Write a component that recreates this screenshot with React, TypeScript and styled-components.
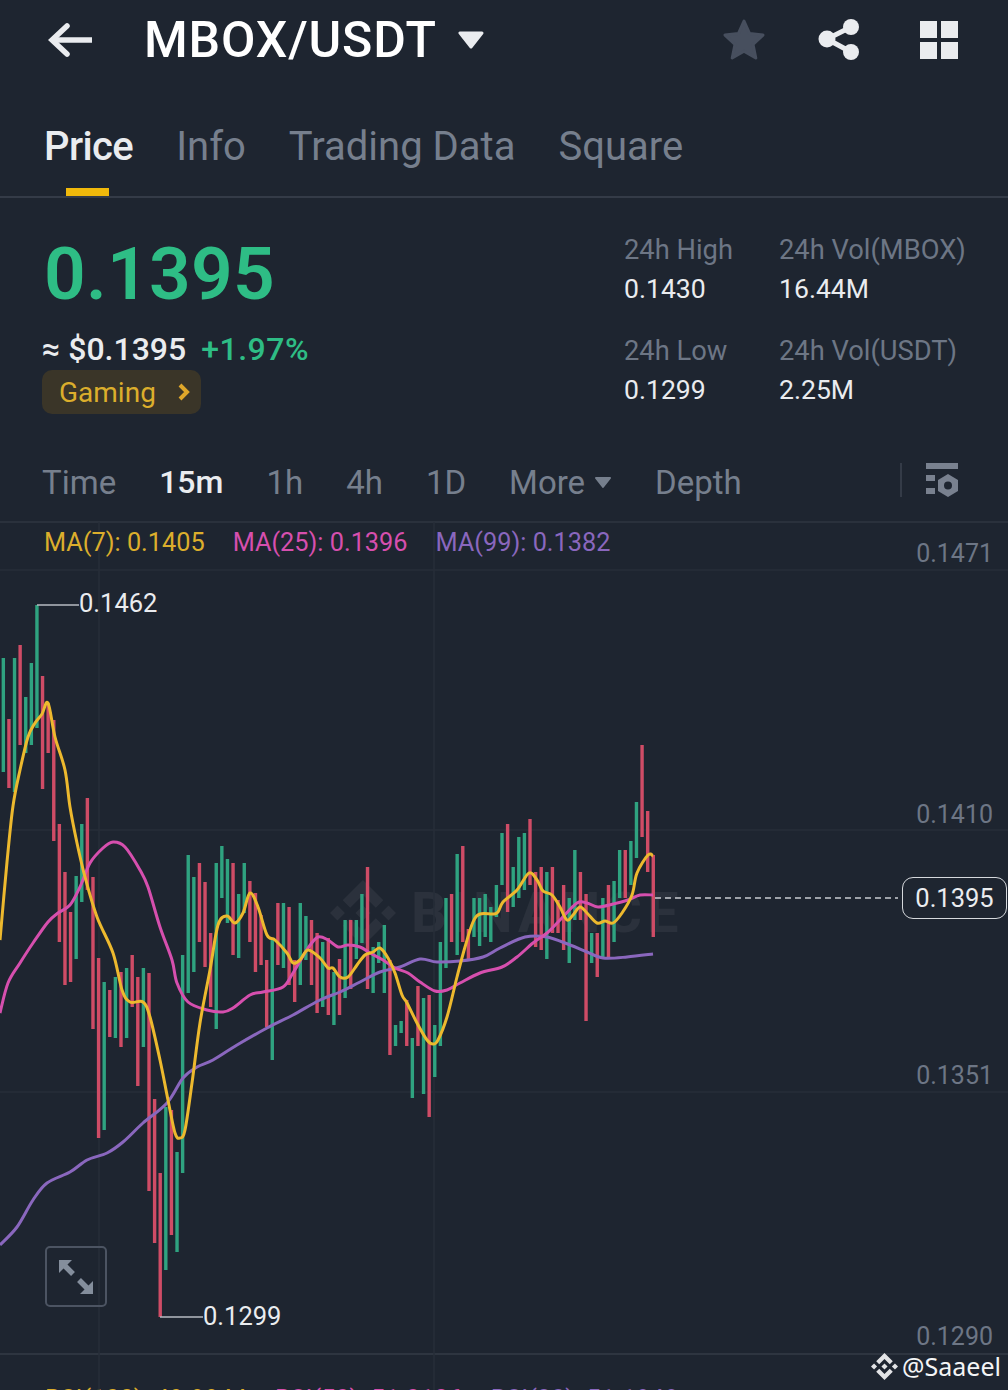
import React from 'react';
import styled, { createGlobalStyle } from 'styled-components';

const GlobalStyle = createGlobalStyle`
  html, body {
    margin: 0;
    padding: 0;
    background: #1e2530;
  }
  * {
    box-sizing: border-box;
  }
`;

const Page = styled.div`
  position: relative;
  width: 1008px;
  height: 1390px;
  overflow: hidden;
  background: #1e2530;
  color: #eaecef;
  font-family: Roboto, "Noto Sans", sans-serif;
`;

const Header = styled.header`
  display: flex;
  align-items: center;
  height: 80px;
  padding: 0 50px 0 48px;
`;

const Title = styled.h1`
  margin: 0 20px 0 52px;
  font-size: 50px;
  font-weight: 500;
  letter-spacing: 0.85px;
  line-height: 1;
  color: #fff;
`;

const HeaderActions = styled.div`
  display: flex;
  align-items: center;
  gap: 52px;
  margin-left: auto;
`;

const Tabs = styled.nav`
  display: flex;
  align-items: center;
  gap: 43px;
  height: 118px;
  padding: 16px 44px 0;
  border-bottom: 2px solid #343b47;
`;

const Tab = styled.span<{ $active?: boolean }>`
  position: relative;
  font-size: 40px;
  font-weight: ${p => (p.$active ? 500 : 400)};
  letter-spacing: ${p => (p.$active ? '-0.6px' : '0')};
  color: ${p => (p.$active ? '#eaecef' : '#767f8d')};

  ${p =>
    p.$active &&
    `&::after {
      content: '';
      position: absolute;
      left: 22px;
      right: 24px;
      bottom: -26px;
      height: 8px;
      background: #f0b90b;
    }`}
`;

const Summary = styled.section`
  display: flex;
  justify-content: space-between;
  height: 242px;
  padding: 36px 0 0 42px;
`;

const PriceBlock = styled.div`
  display: flex;
  flex-direction: column;
  align-items: flex-start;
`;

const LastPrice = styled.div`
  margin-left: 2px;
  font-size: 73px;
  font-weight: 600;
  line-height: 80px;
  letter-spacing: 0.3px;
  color: #2ebd85;
`;

const FiatRow = styled.div`
  display: flex;
  align-items: baseline;
  gap: 15px;
  margin-top: 16px;
  font-size: 32px;
  line-height: 38px;
`;

const FiatPrice = styled.span`
  font-weight: 500;
`;

const Change = styled.span`
  font-weight: 500;
  letter-spacing: 0.5px;
  color: #2ebd85;
`;

const CategoryChip = styled.div`
  display: flex;
  align-items: center;
  gap: 21px;
  height: 44px;
  margin-top: 2px;
  padding: 0 11px 0 17px;
  border-radius: 10px;
  background: #3a3528;
  font-size: 28px;
  color: #dcae2c;
`;

const StatsGrid = styled.div`
  display: grid;
  grid-template-columns: 155px 229px;
  grid-auto-rows: 101px;
`;

const Stat = styled.div`
  display: flex;
  flex-direction: column;
  gap: 5px;
`;

const StatLabel = styled.span`
  font-size: 27.3px;
  line-height: 33px;
  color: #6d7685;
`;

const StatValue = styled.span`
  font-size: 26.6px;
  line-height: 34px;
  color: #eaecef;
`;

const IntervalBar = styled.div`
  display: flex;
  align-items: center;
  gap: 43px;
  height: 83px;
  padding: 3px 49px 0 42px;
  border-bottom: 2px solid #2a313c;
`;

const Interval = styled.span<{ $active?: boolean }>`
  display: flex;
  align-items: center;
  gap: 9px;
  font-size: ${p => (p.$active ? 32 : 33)}px;
  font-weight: ${p => (p.$active ? 500 : 400)};
  color: ${p => (p.$active ? '#eaecef' : '#767f8d')};
`;

const BarTools = styled.div`
  display: flex;
  align-items: center;
  gap: 23px;
  margin: -4px 0 0 auto;
`;

const ToolDivider = styled.span`
  width: 2px;
  height: 34px;
  background: #343b47;
`;

const ChartPane = styled.section`
  position: relative;
  height: 832px;
  border-bottom: 2px solid #2e3540;
`;

const ChartCanvas = styled.svg`
  position: absolute;
  top: -1px;
  left: 0;
  width: 1008px;
  height: 868px;
`;

const Legend = styled.div`
  position: relative;
  display: flex;
  gap: 28px;
  padding: 2px 44px 0;
  font-size: 25.3px;
  line-height: 36px;
`;

const LegendItem = styled.span<{ $color: string }>`
  color: ${p => p.$color};
`;

const Watermark = styled.div`
  position: absolute;
  top: 357px;
  left: 330px;
  display: flex;
  align-items: center;
  gap: 15px;
  color: rgba(255, 255, 255, 0.06);
  font-size: 56px;
  font-weight: 700;
  letter-spacing: 5px;
`;

const AxisTick = styled.span<{ $top: number }>`
  position: absolute;
  top: ${p => p.$top}px;
  right: 15px;
  transform: translateY(-50%);
  font-size: 25px;
  color: #6d7685;
`;

const CurrentPrice = styled.span`
  position: absolute;
  top: 354px;
  left: 902px;
  display: flex;
  align-items: center;
  justify-content: center;
  width: 105px;
  height: 42px;
  border: 1.5px solid #d5d8dc;
  border-radius: 11px;
  background: #1e2530;
  font-size: 25.5px;
  color: #eaecef;
`;

const ExtremeLabel = styled.span<{ $top: number; $left: number }>`
  position: absolute;
  top: ${p => p.$top}px;
  left: ${p => p.$left}px;
  transform: translateY(-50%);
  font-size: 25.5px;
  color: #eaecef;
`;

const ExpandButton = styled.button`
  position: absolute;
  top: 723px;
  left: 45px;
  display: flex;
  align-items: center;
  justify-content: center;
  width: 62px;
  height: 61px;
  padding: 0;
  border: 2px solid #4c5462;
  border-radius: 5px;
  background: transparent;
`;

const RsiLegend = styled.div`
  display: flex;
  gap: 28px;
  padding: 27px 45px 0;
  font-size: 25.3px;
  line-height: 36px;
`;

const Credit = styled.div`
  position: absolute;
  top: 1348px;
  right: 7px;
  display: flex;
  align-items: center;
  gap: 4px;
  font-family: "Noto Sans", sans-serif;
  font-size: 25px;
  line-height: 36px;
  color: #f4f5f6;
`;

type Candle = [number, number, 'g' | 'r'];

const candles: Candle[] = [
  [658, 772, 'g'], [719, 788, 'r'], [658, 792, 'g'], [645, 745, 'r'], [697, 753, 'g'], [663, 745, 'g'],
  [605, 728, 'g'], [676, 789, 'r'], [703, 753, 'r'], [720, 841, 'r'], [824, 942, 'r'], [872, 985, 'r'],
  [912, 982, 'r'], [876, 959, 'g'], [824, 902, 'g'], [798, 890, 'r'], [877, 1029, 'r'], [958, 1138, 'r'],
  [982, 1130, 'g'], [990, 1037, 'r'], [977, 1038, 'g'], [972, 1047, 'r'], [968, 1038, 'g'], [955, 1007, 'r'],
  [977, 1086, 'r'], [968, 1047, 'g'], [973, 1191, 'r'], [1099, 1243, 'r'], [1173, 1317, 'r'], [1107, 1270, 'g'],
  [1110, 1235, 'r'], [1152, 1252, 'g'], [955, 1173, 'g'], [855, 993, 'g'], [877, 972, 'g'], [863, 942, 'r'],
  [882, 967, 'r'], [933, 1007, 'r'], [863, 1029, 'g'], [846, 898, 'g'], [859, 923, 'g'], [863, 955, 'r'],
  [894, 958, 'g'], [863, 913, 'g'], [881, 942, 'r'], [893, 972, 'r'], [915, 965, 'r'], [960, 1027, 'r'],
  [940, 1060, 'g'], [903, 965, 'r'], [903, 968, 'g'], [907, 985, 'r'], [960, 1002, 'r'], [903, 985, 'g'],
  [916, 960, 'g'], [920, 985, 'r'], [933, 1013, 'r'],
  [942, 1007, 'g'], [938, 1015, 'r'], [972, 1025, 'g'], [959, 1015, 'r'], [920, 998, 'g'], [920, 989, 'r'],
  [920, 959, 'g'], [894, 943, 'g'], [867, 989, 'r'], [947, 993, 'g'], [942, 963, 'g'], [925, 993, 'g'],
  [960, 1055, 'r'], [1025, 1046, 'g'], [1021, 1033, 'g'], [1000, 1046, 'r'], [1038, 1098, 'g'], [986, 1046, 'r'],
  [998, 1094, 'g'], [995, 1117, 'r'], [1025, 1077, 'g'], [942, 1046, 'g'], [898, 968, 'g'], [894, 942, 'r'],
  [854, 955, 'g'], [846, 942, 'r'], [929, 960, 'r'], [898, 937, 'g'], [898, 946, 'g'], [894, 937, 'g'],
  [907, 942, 'g'], [885, 917, 'g'], [833, 885, 'g'], [824, 912, 'r'], [867, 907, 'g'], [837, 898, 'g'],
  [833, 890, 'g'], [819, 885, 'r'], [872, 947, 'r'], [867, 950, 'r'], [872, 959, 'g'], [867, 933, 'r'],
  [900, 933, 'r'], [885, 950, 'r'], [898, 963, 'g'], [850, 920, 'g'], [872, 920, 'r'], [894, 1021, 'r'],
  [933, 963, 'g'], [933, 977, 'r'], [898, 959, 'g'], [885, 959, 'r'], [881, 942, 'g'], [850, 898, 'g'],
  [850, 898, 'r'], [841, 885, 'g'], [802, 858, 'g'], [745, 837, 'r'], [811, 872, 'r'], [855, 937, 'r'],
];

const ma7: number[][] = [
  [0, 940], [7, 862], [13, 806], [20, 770], [28, 737], [35, 723], [42, 714], [48, 703], [55, 737], [65, 770], [70, 807],
  [77, 843], [85, 877], [97, 917], [113, 953], [122, 990], [130, 1002], [143, 1002], [150, 1017], [160, 1060],
  [168, 1100], [175, 1133], [180, 1138], [185, 1130], [192, 1083], [200, 1023], [210, 970], [218, 925], [227, 916],
  [235, 923], [243, 913], [250, 893], [258, 907], [267, 935], [275, 940], [287, 953], [293, 963], [300, 960],
  [308, 950], [320, 958], [328, 968], [333, 968], [340, 977], [348, 977], [357, 965], [365, 955], [373, 952],
  [380, 948], [388, 958], [395, 973], [402, 995], [407, 1003], [417, 1023], [427, 1040], [433, 1044], [438, 1040],
  [447, 1017], [457, 977], [465, 947], [473, 922], [480, 914], [493, 914], [498, 912], [503, 902], [517, 890],
  [529, 873], [537, 880], [543, 891], [552, 895], [560, 907], [567, 920], [573, 915], [580, 907], [587, 913],
  [597, 923], [605, 921], [613, 923], [622, 913], [632, 895], [637, 873], [648, 855], [653, 856],
];

const ma25: number[][] = [
  [0, 1013], [8, 983], [20, 963], [33, 943], [48, 922], [58, 913], [70, 905], [80, 887], [90, 863], [103, 848],
  [113, 842], [125, 847], [140, 870], [148, 887], [160, 927], [172, 960], [177, 983], [188, 1002], [207, 1010],
  [223, 1012], [233, 1008], [250, 995], [263, 992], [283, 987], [293, 973], [308, 948], [318, 937], [328, 940],
  [338, 947], [348, 945], [360, 947], [370, 953], [383, 960], [395, 968], [408, 973], [420, 982], [435, 991],
  [447, 990], [460, 983], [480, 973], [502, 967], [517, 957], [533, 943], [547, 933], [560, 920], [577, 903],
  [587, 903], [598, 907], [613, 904], [628, 900], [640, 895], [653, 895],
];

const ma99: number[][] = [
  [0, 1245], [17, 1227], [33, 1200], [47, 1183], [70, 1172], [87, 1160], [107, 1153], [123, 1142], [143, 1123],
  [167, 1103], [183, 1078], [197, 1067], [213, 1060], [237, 1045], [267, 1028], [293, 1015], [320, 1000], [340, 992],
  [360, 982], [380, 972], [400, 967], [420, 959], [437, 962], [460, 961], [483, 957], [500, 948], [525, 937],
  [547, 937], [570, 945], [587, 952], [603, 958], [627, 957], [653, 954],
];

// catmull-rom through the sampled points, so the averages don't look faceted
const smoothPath = (pts: number[][]) => {
  let d = `M${pts[0][0]} ${pts[0][1]}`;
  for (let i = 0; i < pts.length - 1; i++) {
    const p0 = pts[Math.max(i - 1, 0)];
    const p1 = pts[i];
    const p2 = pts[i + 1];
    const p3 = pts[Math.min(i + 2, pts.length - 1)];
    const c1x = p1[0] + (p2[0] - p0[0]) / 6;
    const c1y = p1[1] + (p2[1] - p0[1]) / 6;
    const c2x = p2[0] - (p3[0] - p1[0]) / 6;
    const c2y = p2[1] - (p3[1] - p1[1]) / 6;
    d += `C${c1x.toFixed(1)} ${c1y.toFixed(1)} ${c2x.toFixed(1)} ${c2y.toFixed(1)} ${p2[0]} ${p2[1]}`;
  }
  return d;
};

const BinanceMark: React.FC<{ size: number; color: string }> = ({ size, color }) => (
  <svg width={size} height={size} viewBox="0 0 126.61 126.61" fill={color}>
    <path d="M38.73 53.2 63.3 28.63l24.59 24.59 14.3-14.3L63.3 0 24.43 38.88z" />
    <path d="M0 63.31l14.3-14.3 14.3 14.3-14.3 14.3z" />
    <path d="M38.73 73.41 63.3 97.98l24.59-24.59 14.3 14.29-38.89 38.93-38.87-38.88z" />
    <path d="M98.01 63.31l14.3-14.3 14.3 14.3-14.3 14.3z" />
    <path d="M77.81 63.3 63.3 48.78 48.8 63.29l14.5 14.51z" />
  </svg>
);

const BackIcon = () => (
  <svg width="44" height="34" viewBox="0 0 44 34" fill="none" stroke="#eaecef" strokeWidth="5.5">
    <path d="M44 17H4" />
    <path d="M19 3 4 17l15 14" strokeLinecap="round" strokeLinejoin="miter" />
  </svg>
);

const Caret: React.FC<{ width: number; height: number; color: string }> = ({ width, height, color }) => (
  <svg width={width} height={height} viewBox="0 0 28 18">
    <path d="M3 2h22L14 16z" fill={color} stroke={color} strokeWidth="3" strokeLinejoin="round" />
  </svg>
);

const StarIcon = () => (
  <svg width="44" height="44" viewBox="0 0 44 44">
    <path
      d="M22 3l5.6 12.6 13.4 1.5-10 9.3 2.8 13.6L22 33.2 10.2 40l2.8-13.6-10-9.3 13.4-1.5z"
      fill="#474f5e"
      stroke="#474f5e"
      strokeWidth="3"
      strokeLinejoin="round"
    />
  </svg>
);

const ShareIcon = () => (
  <svg width="50" height="44" viewBox="0 0 50 44" fill="#eaecef" stroke="#eaecef">
    <path d="M33 9 9 21l24 13" fill="none" strokeWidth="5" />
    <circle cx="33" cy="9" r="8" stroke="none" />
    <circle cx="9" cy="21" r="8.5" stroke="none" />
    <circle cx="33" cy="34" r="8" stroke="none" />
  </svg>
);

const GridIcon = () => (
  <svg width="38" height="38" viewBox="0 0 38 38" fill="#eaecef">
    <rect x="0" y="0" width="17" height="17" />
    <rect x="21" y="0" width="17" height="17" />
    <rect x="0" y="21" width="17" height="17" />
    <rect x="21" y="21" width="17" height="17" />
  </svg>
);

const IndicatorIcon = () => (
  <svg width="34" height="36" viewBox="0 0 34 36" fill="#79818f">
    <rect x="1" y="1" width="32" height="6" />
    <rect x="1" y="13" width="9" height="6" />
    <rect x="1" y="26" width="9" height="6" />
    <path
      fillRule="evenodd"
      d="M23 12l10 6v11l-10 6-10-6V18zM23 19.5a4 4 0 1 0 0 8 4 4 0 0 0 0-8z"
    />
  </svg>
);

const ExpandIcon = () => (
  <svg width="38" height="38" viewBox="0 0 38 38" fill="#848e9c" stroke="#848e9c">
    <path d="M2 2h13L2 15z" stroke="none" />
    <path d="M36 36H23l13-13z" stroke="none" />
    <path d="M8 8l8 8M22 22l8 8" strokeWidth="5.5" fill="none" />
  </svg>
);

const ChevronIcon = () => (
  <svg width="13" height="18" viewBox="0 0 13 18" fill="none" stroke="#dfa72a" strokeWidth="4">
    <path d="M3 2l7 7-7 7" />
  </svg>
);

const tabs = ['Price', 'Info', 'Trading Data', 'Square'];

const stats = [
  { label: '24h High', value: '0.1430' },
  { label: '24h Vol(MBOX)', value: '16.44M' },
  { label: '24h Low', value: '0.1299' },
  { label: '24h Vol(USDT)', value: '2.25M' },
];

const axisTicks = [
  { label: '0.1471', y: 553 },
  { label: '0.1410', y: 814 },
  { label: '0.1351', y: 1075 },
  { label: '0.1290', y: 1336 },
];

const CandleChart = () => (
  <ChartCanvas viewBox="0 522 1008 868">
    <g stroke="#272e39" strokeWidth="1.5">
      <path d="M0 570H1008M0 830H1008M0 1092H1008" />
      <path d="M99 522V1390M434 522V1390" />
    </g>
    {candles.map(([top, bottom, side], i) => (
      <rect
        key={i}
        x={3.33 + 5.603 * i - 1.7}
        y={top}
        width="3.4"
        height={bottom - top}
        fill={side === 'g' ? '#2fa380' : '#cf4c66'}
      />
    ))}
    <path d={smoothPath(ma99)} fill="none" stroke="#8a67be" strokeWidth="3" />
    <path d={smoothPath(ma25)} fill="none" stroke="#d64fae" strokeWidth="3" />
    <path d={smoothPath(ma7)} fill="none" stroke="#edb92e" strokeWidth="3" />
    <path d="M37 605H79M160 1317H203" stroke="#b7bbc1" strokeWidth="1.5" fill="none" />
    <path d="M655 898H898" stroke="#c9ccd1" strokeWidth="1.5" strokeDasharray="6 4" />
  </ChartCanvas>
);

const App: React.FC = () => {
  return (
    <Page>
      <GlobalStyle />
      <Header>
        <BackIcon />
        <Title>MBOX/USDT</Title>
        <Caret width={28} height={18} color="#eaecef" />
        <HeaderActions>
          <StarIcon />
          <ShareIcon />
          <GridIcon />
        </HeaderActions>
      </Header>
      <Tabs>
        {tabs.map((tab, i) => (
          <Tab key={tab} $active={i === 0}>
            {tab}
          </Tab>
        ))}
      </Tabs>
      <Summary>
        <PriceBlock>
          <LastPrice>0.1395</LastPrice>
          <FiatRow>
            <FiatPrice>≈ $0.1395</FiatPrice>
            <Change>+1.97%</Change>
          </FiatRow>
          <CategoryChip>
            Gaming
            <ChevronIcon />
          </CategoryChip>
        </PriceBlock>
        <StatsGrid>
          {stats.map(stat => (
            <Stat key={stat.label}>
              <StatLabel>{stat.label}</StatLabel>
              <StatValue>{stat.value}</StatValue>
            </Stat>
          ))}
        </StatsGrid>
      </Summary>
      <IntervalBar>
        <Interval>Time</Interval>
        <Interval $active>15m</Interval>
        <Interval>1h</Interval>
        <Interval>4h</Interval>
        <Interval>1D</Interval>
        <Interval>
          More
          <Caret width={18} height={13} color="#767f8d" />
        </Interval>
        <Interval>Depth</Interval>
        <BarTools>
          <ToolDivider />
          <IndicatorIcon />
        </BarTools>
      </IntervalBar>
      <ChartPane>
        <Watermark>
          <BinanceMark size={66} color="rgba(255,255,255,0.06)" />
          BINANCE
        </Watermark>
        <CandleChart />
        <Legend>
          <LegendItem $color="#dcae2c">MA(7): 0.1405</LegendItem>
          <LegendItem $color="#d64fae">MA(25): 0.1396</LegendItem>
          <LegendItem $color="#8a67be">MA(99): 0.1382</LegendItem>
        </Legend>
        {axisTicks.map(tick => (
          <AxisTick key={tick.label} $top={tick.y - 523}>
            {tick.label}
          </AxisTick>
        ))}
        <CurrentPrice>0.1395</CurrentPrice>
        <ExtremeLabel $left={79} $top={80}>
          0.1462
        </ExtremeLabel>
        <ExtremeLabel $left={203} $top={793}>
          0.1299
        </ExtremeLabel>
        <ExpandButton>
          <ExpandIcon />
        </ExpandButton>
      </ChartPane>
      <RsiLegend>
        <LegendItem $color="#dcae2c">RSI(100): 49.8844</LegendItem>
        <LegendItem $color="#d64fae">RSI(50): 51.2126</LegendItem>
        <LegendItem $color="#8a67be">RSI(20): 51.1848</LegendItem>
      </RsiLegend>
      <Credit>
        <BinanceMark size={27} color="#e3e4e6" />
        @Saaeel
      </Credit>
    </Page>
  );
};

export default App;
